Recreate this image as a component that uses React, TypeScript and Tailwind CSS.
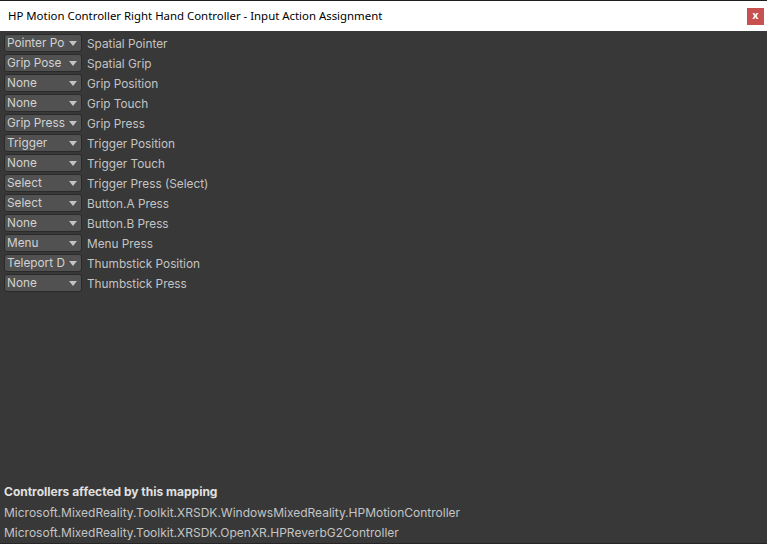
const rows: [string, string][] = [
  ["Pointer Pose", "Spatial Pointer"],
  ["Grip Pose", "Spatial Grip"],
  ["None", "Grip Position"],
  ["None", "Grip Touch"],
  ["Grip Press", "Grip Press"],
  ["Trigger", "Trigger Position"],
  ["None", "Trigger Touch"],
  ["Select", "Trigger Press (Select)"],
  ["Select", "Button.A Press"],
  ["None", "Button.B Press"],
  ["Menu", "Menu Press"],
  ["Teleport Direction", "Thumbstick Position"],
  ["None", "Thumbstick Press"],
];

function Dropdown({ value }: { value: string }) {
  return (
    <div className="relative flex items-center w-[78px] h-[18px] bg-[#515151] border border-[#2a2a2a] rounded-[3px]">
      <span className="block w-[60px] pl-[2px] mt-[1px] whitespace-nowrap overflow-hidden text-[#d2d2d2]">
        {value}
      </span>
      <svg
        className="absolute right-[4px] top-[6px]"
        width="8"
        height="5"
        viewBox="0 0 8 5"
      >
        <path d="M0 0 H8 L4 5 Z" fill="#c4c4c4" />
      </svg>
    </div>
  );
}

export default function App() {
  return (
    <div
      className="w-[767px] h-[544px] flex flex-col bg-[#383838] overflow-hidden"
      style={{ fontFamily: "Inter, 'Noto Sans', sans-serif" }}
    >
      <div className="h-[1px] bg-[#1e1e1e]" />
      <header className="h-[30px] bg-white flex items-center justify-between pl-[8px] pr-[3px]">
        <span
          className="text-[11.4px] text-black"
          style={{ fontFamily: "'Noto Sans', 'Open Sans', sans-serif" }}
        >
          HP Motion Controller Right Hand Controller - Input Action Assignment
        </span>
        <div className="w-[17px] h-[17px] bg-[#c75050] flex items-center justify-center mt-[1px]">
          <span className="text-white text-[11px] font-bold leading-none mb-[2px]">x</span>
        </div>
      </header>
      <div className="flex-1 flex flex-col px-[4px] pt-[3px] text-[11.8px]">
        <div className="flex flex-col gap-[2px]">
          {rows.map(([v, label], i) => (
            <div key={i} className="flex items-center gap-[5px] h-[18px]">
              <Dropdown value={v} />
              <span className="text-[#c4c4c4] whitespace-nowrap mt-[3px]">{label}</span>
            </div>
          ))}
        </div>
        <div className="flex-1" />
        <div className="flex flex-col text-[12px]">
          <div className="font-bold text-[#e0e0e0] h-[20px] leading-[20px]">
            Controllers affected by this mapping
          </div>
          <div className="text-[#c4c4c4] h-[20px] leading-[20px] mt-[1px]">
            Microsoft.MixedReality.Toolkit.XRSDK.WindowsMixedReality.HPMotionController
          </div>
          <div className="text-[#c4c4c4] h-[20px] leading-[20px]">
            Microsoft.MixedReality.Toolkit.XRSDK.OpenXR.HPReverbG2Controller
          </div>
        </div>
      </div>
      <div className="h-[1px] bg-[#262626]" />
    </div>
  );
}
